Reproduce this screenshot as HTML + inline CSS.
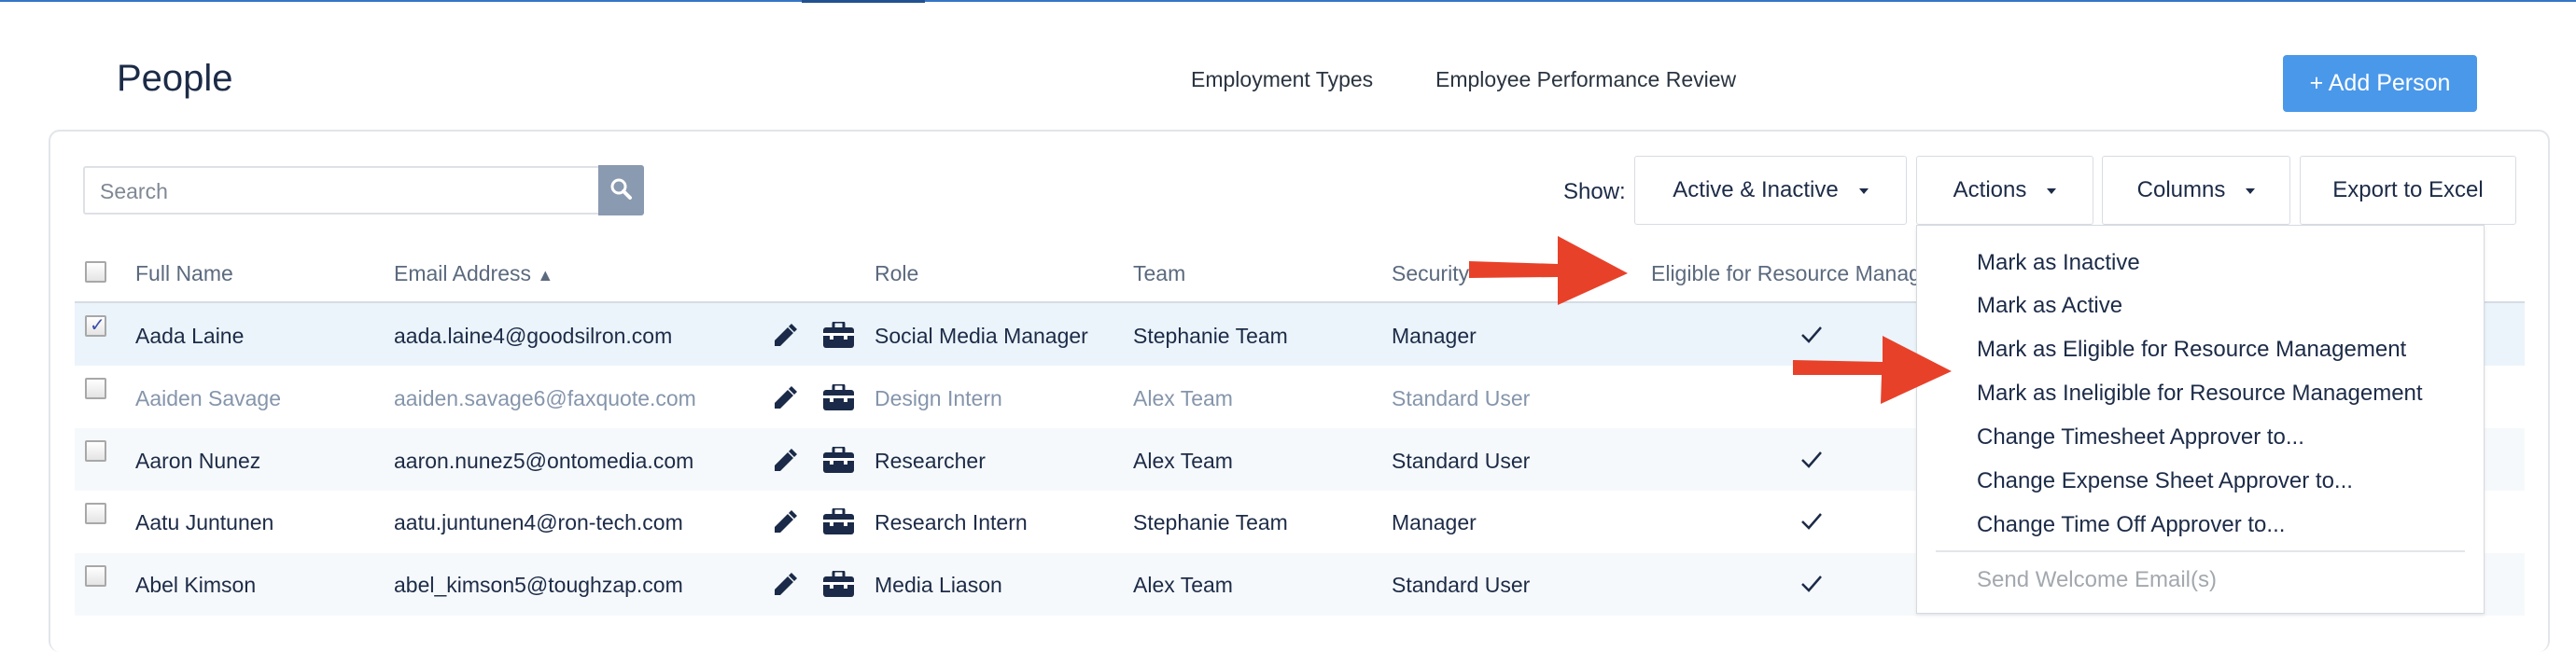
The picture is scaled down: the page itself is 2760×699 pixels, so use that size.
<!DOCTYPE html>
<html><head><meta charset="utf-8"><style>
*{margin:0;padding:0;box-sizing:border-box}
body{width:2760px;height:672px;background:#fff;font-family:"Liberation Sans",sans-serif;color:#1c2b47;position:relative;overflow:hidden}
.a{position:absolute;white-space:nowrap}
.t{font-size:23px;line-height:28px}
.h{color:#5b6a7e}
.g{color:#8595ab}
.cb{position:absolute;width:23px;height:23px;border:2px solid #a8a8a8;background:linear-gradient(#fff,#e4e4e4);border-radius:2px}
.btn{position:absolute;border:1px solid #d8dde3;border-radius:3px;background:#fff;top:167px;height:74px;font-size:24px;line-height:72px;text-align:center;color:#1c2b47}
.car{display:inline-block;width:0;height:0;border-left:5px solid transparent;border-right:5px solid transparent;border-top:6px solid #1c2b47;vertical-align:middle;margin-left:22px}
.row{position:absolute;left:80px;width:2625px;height:67px}
.mi{position:absolute;left:2118px;font-size:24px;line-height:28px;color:#1c2b47;white-space:nowrap}
</style></head><body>
<div class="a" style="left:0;top:0;width:2760px;height:2px;background:#3574c6"></div>
<div class="a" style="left:859px;top:0;width:132px;height:3px;background:#22518f"></div>
<div class="a" style="left:125px;top:60px;font-size:40px;line-height:48px;color:#1c2b47">People</div>
<div class="a" style="left:1276px;top:71px;font-size:23px;line-height:28px;color:#2a3440">Employment Types</div>
<div class="a" style="left:1538px;top:71px;font-size:23px;line-height:28px;color:#2a3440">Employee Performance Review</div>
<div class="a" style="left:2446px;top:59px;width:208px;height:61px;background:#4a98ea;border-radius:4px;color:#fff;font-size:25px;line-height:61px;text-align:center">+ Add Person</div>
<div class="a" style="left:52px;top:139px;width:2680px;height:560px;border:2px solid #e2e5ea;border-radius:12px;border-bottom:none"></div>
<div class="a" style="left:89px;top:178px;width:553px;height:52px;border:2px solid #dde1e6;border-right:none;border-radius:3px 0 0 3px"></div>
<div class="a t" style="left:107px;top:191px;color:#7f8894">Search</div>
<div class="a" style="left:641px;top:177px;width:49px;height:54px;background:#8a9ab0;border-radius:0 3px 3px 0"></div>
<svg class="a" style="left:652px;top:189px" width="28" height="28" viewBox="0 0 28 28"><circle cx="11" cy="11" r="7" fill="none" stroke="#fff" stroke-width="3"/><path d="M16 16l7 7" stroke="#fff" stroke-width="4" stroke-linecap="round"/></svg>
<div class="a" style="left:1675px;top:192px;font-size:24px;line-height:28px">Show:</div>
<div class="btn" style="left:1751px;width:292px">Active &amp; Inactive<span class="car"></span></div>
<div class="btn" style="left:2053px;width:190px">Actions<span class="car"></span></div>
<div class="btn" style="left:2252px;width:202px">Columns<span class="car"></span></div>
<div class="btn" style="left:2464px;width:232px">Export to Excel</div>
<!-- header -->
<div class="cb" style="left:91px;top:280px"></div>
<div class="a t h" style="left:145px;top:279px">Full Name</div>
<div class="a t h" style="left:422px;top:279px">Email Address <span style="font-size:18px">▲</span></div>
<div class="a t h" style="left:937px;top:279px">Role</div>
<div class="a t h" style="left:1214px;top:279px">Team</div>
<div class="a t h" style="left:1491px;top:279px">Security</div>
<div class="a t h" style="left:1769px;top:279px;width:284px;overflow:hidden">Eligible for Resource Management</div>
<div class="a" style="left:80px;top:323px;width:2625px;height:2px;background:#d5dce4"></div>
<div class="row" style="top:325px;background:#ebf4fb"></div>
<div class="row" style="top:459px;background:#f6f9fb"></div>
<div class="row" style="top:593px;background:#f6f9fb"></div>
<!-- rows -->
<div class="cb" style="left:91px;top:338px"></div><div class="a" style="left:96px;top:336px;color:#3b4fa8;font-size:20px">✓</div>
<div class="cb" style="left:91px;top:405px"></div>
<div class="cb" style="left:91px;top:472px"></div>
<div class="cb" style="left:91px;top:539px"></div>
<div class="cb" style="left:91px;top:606px"></div>

<div class="a t" style="left:145px;top:346px">Aada Laine</div>
<div class="a t" style="left:422px;top:346px">aada.laine4@goodsilron.com</div>
<div class="a t" style="left:937px;top:346px">Social Media Manager</div>
<div class="a t" style="left:1214px;top:346px">Stephanie Team</div>
<div class="a t" style="left:1491px;top:346px">Manager</div>

<div class="a t g" style="left:145px;top:413px">Aaiden Savage</div>
<div class="a t g" style="left:422px;top:413px">aaiden.savage6@faxquote.com</div>
<div class="a t g" style="left:937px;top:413px">Design Intern</div>
<div class="a t g" style="left:1214px;top:413px">Alex Team</div>
<div class="a t g" style="left:1491px;top:413px">Standard User</div>

<div class="a t" style="left:145px;top:480px">Aaron Nunez</div>
<div class="a t" style="left:422px;top:480px">aaron.nunez5@ontomedia.com</div>
<div class="a t" style="left:937px;top:480px">Researcher</div>
<div class="a t" style="left:1214px;top:480px">Alex Team</div>
<div class="a t" style="left:1491px;top:480px">Standard User</div>

<div class="a t" style="left:145px;top:546px">Aatu Juntunen</div>
<div class="a t" style="left:422px;top:546px">aatu.juntunen4@ron-tech.com</div>
<div class="a t" style="left:937px;top:546px">Research Intern</div>
<div class="a t" style="left:1214px;top:546px">Stephanie Team</div>
<div class="a t" style="left:1491px;top:546px">Manager</div>

<div class="a t" style="left:145px;top:613px">Abel Kimson</div>
<div class="a t" style="left:422px;top:613px">abel_kimson5@toughzap.com</div>
<div class="a t" style="left:937px;top:613px">Media Liason</div>
<div class="a t" style="left:1214px;top:613px">Alex Team</div>
<div class="a t" style="left:1491px;top:613px">Standard User</div>

<!-- icons -->
<svg width="0" height="0" style="position:absolute"><defs>
<g id="pen"><path d="M18 1l6 6-3 3-6-6z" fill="#1a2a48"/><path d="M14 5l6 6L6 25l-6 0 0-6z" fill="#1a2a48"/></g>
<g id="bc"><rect x="0" y="6" width="33" height="22" rx="3" fill="#1a2a48"/><rect x="11" y="0" width="11" height="8" rx="2" fill="none" stroke="#1a2a48" stroke-width="3"/><rect x="0" y="12" width="33" height="3" fill="#fff"/><rect x="7" y="12" width="4" height="7" fill="#fff"/><rect x="22" y="12" width="4" height="7" fill="#fff"/></g>
<path id="ck" d="M2 11l7 7L22 3" fill="none" stroke="#1c2b47" stroke-width="2.5"/>
</defs></svg>
<svg class="a" style="left:830px;top:346px" width="26" height="26"><use href="#pen"/></svg>
<svg class="a" style="left:830px;top:413px" width="26" height="26"><use href="#pen"/></svg>
<svg class="a" style="left:830px;top:480px" width="26" height="26"><use href="#pen"/></svg>
<svg class="a" style="left:830px;top:546px" width="26" height="26"><use href="#pen"/></svg>
<svg class="a" style="left:830px;top:613px" width="26" height="26"><use href="#pen"/></svg>
<svg class="a" style="left:882px;top:345px" width="34" height="29"><use href="#bc"/></svg>
<svg class="a" style="left:882px;top:412px" width="34" height="29"><use href="#bc"/></svg>
<svg class="a" style="left:882px;top:479px" width="34" height="29"><use href="#bc"/></svg>
<svg class="a" style="left:882px;top:545px" width="34" height="29"><use href="#bc"/></svg>
<svg class="a" style="left:882px;top:612px" width="34" height="29"><use href="#bc"/></svg>
<svg class="a" style="left:1929px;top:348px" width="26" height="22"><use href="#ck"/></svg>
<svg class="a" style="left:1929px;top:482px" width="26" height="22"><use href="#ck"/></svg>
<svg class="a" style="left:1929px;top:548px" width="26" height="22"><use href="#ck"/></svg>
<svg class="a" style="left:1929px;top:615px" width="26" height="22"><use href="#ck"/></svg>
<!-- dropdown -->
<div class="a" style="left:2053px;top:241px;width:609px;height:417px;background:#fff;border:1px solid #d5dae0;box-shadow:0 2px 4px rgba(0,0,0,.08)"></div>
<div class="mi" style="top:268px">Mark as Inactive</div>
<div class="mi" style="top:314px">Mark as Active</div>
<div class="mi" style="top:361px">Mark as Eligible for Resource Management</div>
<div class="mi" style="top:408px">Mark as Ineligible for Resource Management</div>
<div class="mi" style="top:455px">Change Timesheet Approver to...</div>
<div class="mi" style="top:502px">Change Expense Sheet Approver to...</div>
<div class="mi" style="top:549px">Change Time Off Approver to...</div>
<div class="a" style="left:2074px;top:590px;width:567px;height:2px;background:#e3e6ea"></div>
<div class="mi" style="top:608px;color:#a3a8ae">Send Welcome Email(s)</div>
<!-- arrows -->
<svg class="a" style="left:0;top:0" width="2760" height="672">
<polygon points="1574,280 1669,283 1669,253 1744,293 1669,327 1669,297 1574,298" fill="#e8412a"/>
<polygon points="1921,386 2017,388 2017,360 2091,398 2015,433 2016,402 1921,402" fill="#e8412a"/>
</svg>
</body></html>
